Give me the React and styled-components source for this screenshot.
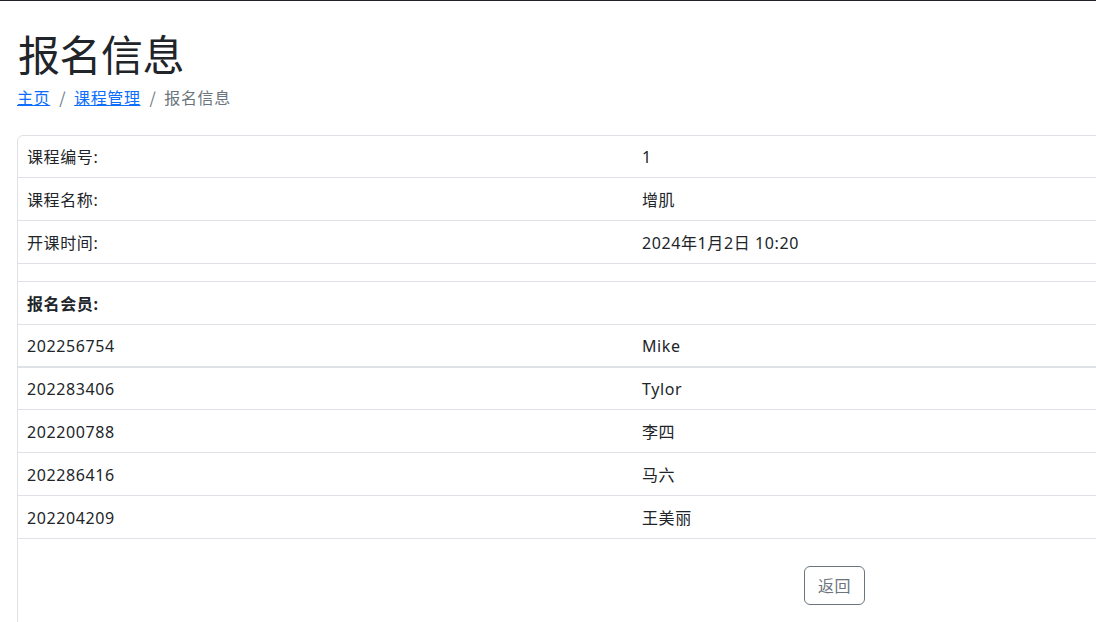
import styled, { createGlobalStyle } from "styled-components";

const GlobalStyle = createGlobalStyle`
  html, body {
    margin: 0;
    padding: 0;
    overflow: hidden;
    background: #fff;
  }
  body {
    font-family: "Noto Sans", "Noto Sans CJK SC", sans-serif;
    font-size: 16px;
    color: #212529;
  }
`;

const course = [
  { label: "课程编号:", value: "1" },
  { label: "课程名称:", value: "增肌" },
  { label: "开课时间:", value: "2024年1月2日 10:20" },
];

const members = [
  { id: "202256754", name: "Mike" },
  { id: "202283406", name: "Tylor" },
  { id: "202200788", name: "李四" },
  { id: "202286416", name: "马六" },
  { id: "202204209", name: "王美丽" },
];

export default function App() {
  return (
    <>
      <GlobalStyle />
      <Page>
        <Titulo>报名信息</Titulo>
        <Breadcrumb>
          <Crumb href="#">主页</Crumb>
          <Sep>/</Sep>
          <Crumb href="#">课程管理</Crumb>
          <Sep>/</Sep>
          <Active>报名信息</Active>
        </Breadcrumb>
        <Card>
          <Table>
            <colgroup>
              <col style={{ width: 615 }} />
              <col />
            </colgroup>
            <tbody>
              {course.map((c, i) => (
                <Row key={c.label}>
                  <Cell compact={i === 0}>{c.label}</Cell>
                  <Cell compact={i === 0}>{c.value}</Cell>
                </Row>
              ))}
              <Row>
                <Cell empty />
                <Cell empty />
              </Row>
              <Row>
                <Cell bold>报名会员:</Cell>
                <Cell />
              </Row>
              {members.map((m, i) => (
                <Row key={m.id} thick={i === 0}>
                  <Cell compact={i < 2}>{m.id}</Cell>
                  <Cell compact={i < 2}>{m.name}</Cell>
                </Row>
              ))}
            </tbody>
          </Table>
          <Footer>
            <BackButton>返回</BackButton>
          </Footer>
        </Card>
      </Page>
    </>
  );
}

const Page = styled.div`
  border-top: 1px solid #212529;
  padding: 28px 0 0 17px;
`;

const Titulo = styled.h1`
  margin: 0 0 0 1px;
  font-size: 42px;
  font-weight: 400;
  line-height: 48px;
  letter-spacing: -0.5px;
  font-family: "Noto Sans CJK SC", sans-serif;
`;

const Breadcrumb = styled.nav`
  margin-top: 8px;
  display: flex;
  align-items: center;
  line-height: 24px;
  letter-spacing: 0.6px;
  font-family: "Noto Sans CJK SC", sans-serif;
`;

const Crumb = styled.a`
  color: #0d6efd;
  text-decoration: underline;
`;

const Sep = styled.span`
  color: #6c757d;
  padding: 0 8px 0 9px;
`;

const Active = styled.span`
  color: #6c757d;
`;

const Card = styled.div`
  margin-top: 26px;
  width: 1230px;
  height: 520px;
  border: 1px solid #dee2e6;
  border-radius: 6px;
`;

const Table = styled.table`
  width: 100%;
  border-collapse: collapse;
  table-layout: fixed;
  letter-spacing: 0.6px;
`;

const Row = styled.tr`
  border-bottom: ${(props) => (props.thick ? "2px" : "1px")} solid #dee2e6;
`;

const Cell = styled.td`
  padding: ${(props) =>
    props.empty ? "0 9px" : props.compact ? "9px 9px 8px" : "10px 9px 8px"};
  height: ${(props) => (props.empty ? "17px" : "24px")};
  line-height: 24px;
  font-weight: ${(props) => (props.bold ? 700 : 400)};
  vertical-align: middle;
`;

const Footer = styled.div`
  padding: 27px 0 0 786px;
`;

const BackButton = styled.button`
  font-family: "Noto Sans CJK SC", sans-serif;
  font-size: 16px;
  line-height: 25px;
  letter-spacing: 0.6px;
  padding: 6px 13px;
  color: #6c757d;
  background: #fff;
  border: 1px solid #6c757d;
  border-radius: 6px;
`;
